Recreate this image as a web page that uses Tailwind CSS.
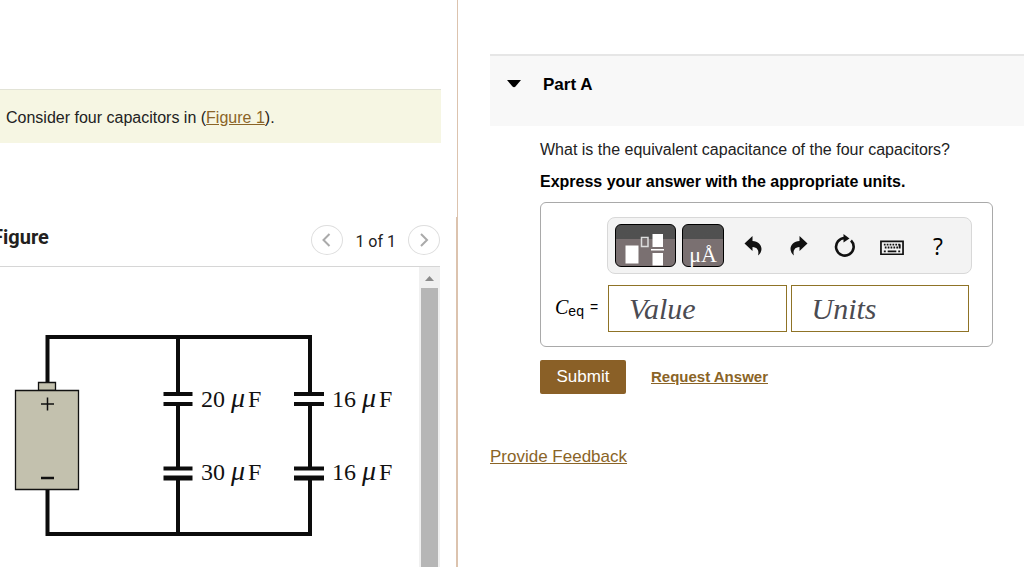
<!DOCTYPE html>
<html lang="en">
<head>
    <meta charset="UTF-8">
    <meta name="viewport" content="width=device-width, initial-scale=1.0">
    <title>Equivalent Capacitance</title>

    <!-- Tailwind CSS via CDN -->
    <script src="https://cdn.jsdelivr.net/npm/@tailwindcss/browser@4"></script>
</head>
<body class="bg-white text-black font-['Liberation_Sans',Arial,sans-serif]">
    <div class="flex min-h-screen overflow-hidden">
        <!-- Problem and figure -->
        <aside class="flex w-[458px] shrink-0 flex-col border-r border-[#dcc3ae]">
            <div class="h-[217px] pt-[89px]">
                <p class="mr-4 border-t border-[#e2e3d6] bg-[#f6f6e3] pt-4 pb-3.5 pl-1.5 text-base/[23px] text-[#222]">
                    Consider four capacitors in (<a href="#figure" class="text-[#8a6427] underline">Figure 1</a>).
                </p>
            </div>

            <section id="figure" class="flex grow flex-col border-r border-[#dcc3ae] pr-4">
                <header class="flex h-[50px] items-center justify-between border-b border-[#d6d6d6] font-[Roboto,sans-serif]">
                    <h2 class="-ml-2 pb-2.5 text-xl font-bold text-[#231f20]">Figure</h2>
                    <nav class="flex items-center gap-3" aria-label="Figures">
                        <button type="button" aria-label="Previous figure" class="mb-1 flex h-[30px] w-8 items-center justify-center rounded-[50%] border border-[#dedede]">
                            <svg class="h-4 w-4" viewBox="0 0 16 16" fill="none" stroke="#aaa" stroke-width="2"><path d="M10.500 2 4.500 8l6 6"/></svg>
                        </button>
                        <span class="text-base text-[#222]">1 of 1</span>
                        <button type="button" aria-label="Next figure" class="mb-1 flex h-[30px] w-8 items-center justify-center rounded-[50%] border border-[#dedede]">
                            <svg class="h-4 w-4" viewBox="0 0 16 16" fill="none" stroke="#aaa" stroke-width="2"><path d="m5 2 6 6-6 6"/></svg>
                        </button>
                    </nav>
                </header>

                <div class="flex grow">
                    <!-- Circuit -->
                    <svg class="h-[300px] grow" viewBox="0 267 419 300" preserveAspectRatio="xMinYMin meet" role="img" aria-label="Battery with four capacitors">
                        <g fill="none" stroke="#0c0c0c" stroke-width="4">
                            <path d="M47.500 383V337H310V393M47.500 490V534H310V480"/>
                            <path d="M178 337V393M178 404V467M178 480V534M310 404V467"/>
                            <path d="M163.500 394h29M163.500 404h29M163.500 468.500h29M294 394h30M294 404h30M294 468.500h30"/>
                            <path stroke-width="5" d="M163.500 478h29M294 478h30"/>
                        </g>
                        <g fill="#c3c1ae" stroke="#111" stroke-width="1.300">
                            <path d="M38.500 382.500h17v8h-17z"/>
                            <path d="M15.500 390.500h63v99h-63z"/>
                        </g>
                        <path d="M41 404h13M47.500 397.500v13" stroke="#111" stroke-width="1.500"/>
                        <path d="M41 478h13" stroke="#111" stroke-width="2.500"/>
                        <g class="font-['Liberation_Serif',serif] text-2xl" fill="#111">
                            <text x="201" y="407">20 <tspan class="text-[28px] italic">μ</tspan><tspan x="248">F</tspan></text>
                            <text x="201" y="480">30 <tspan class="text-[28px] italic">μ</tspan><tspan x="248">F</tspan></text>
                            <text x="332" y="407">16 <tspan class="text-[28px] italic">μ</tspan><tspan x="379">F</tspan></text>
                            <text x="332" y="480">16 <tspan class="text-[28px] italic">μ</tspan><tspan x="379">F</tspan></text>
                        </g>
                    </svg>
                    <!-- Scrollbar -->
                    <div class="flex w-[21px] flex-col items-center bg-[#f0f0f0]">
                        <svg class="h-[21px] w-[21px]" viewBox="0 0 21 21"><path d="M6 14h9l-4.500-5z" fill="#8b8b8b"/></svg>
                        <div class="w-[17px] grow bg-[#b6b6b6]"></div>
                    </div>
                </div>
            </section>
        </aside>

        <!-- Question -->
        <main class="grow pt-[54px] pl-8">
            <header class="flex h-[72px] items-start gap-[21px] border-t-2 border-[#e6e6e6] bg-[#f8f8f8] pt-4 pl-4">
                <button type="button" aria-label="Collapse part" class="flex h-6 items-center">
                    <svg class="h-2 w-4" viewBox="0 0 16 8"><path d="M1 0h14L9.500 6.500q-1.500 1.500-3 0z"/></svg>
                </button>
                <h2 class="text-[17px]/[26px] font-bold">Part A</h2>
            </header>

            <form class="pr-[31px] pl-[50px]">
                <p class="pt-3 text-base/6 text-[#222]">What is the equivalent capacitance of the four capacitors?</p>
                <p class="pt-2 text-base/6 font-bold">Express your answer with the appropriate units.</p>

                <div class="mt-2 grid grid-cols-[52px_1fr] gap-y-[11px] rounded-md border border-[#a9a9a9] py-3.5 pr-5 pl-3.5">
                    <!-- Toolbar -->
                    <div class="col-start-2 flex h-[57px] items-center rounded-lg border border-[#d8d8d8] bg-[#f3f3f3] pl-[7px]">
                        <button type="button" aria-label="Templates" class="h-[43px] w-[61px] overflow-hidden rounded-md border border-black bg-linear-to-b from-[#505050] from-35% to-[#7a7071] to-35%">
                            <svg class="h-[41px] w-[59px]" viewBox="0 0 59 41" fill="#fff">
                                <path d="M9.500 20.500h13v18h-13zM36.500 9h10.500v13h-10.500zM36.500 28h10.500v12.500h-10.500zM35 24h13v1.500h-13z"/>
                                <path d="M25.500 12.500h6.500v9h-6.500z" fill="none" stroke="#ddd" stroke-width="1.500"/>
                            </svg>
                        </button>
                        <button type="button" aria-label="Units" class="ml-1.5 flex h-[43px] w-[42px] items-end justify-center rounded-md border border-black bg-linear-to-b from-[#505050] from-35% to-[#7a7071] to-35% font-['Liberation_Serif',serif] text-[22px]/[22px] text-white">μÅ</button>
                        <div class="grid grow grid-cols-5 items-center justify-items-center pr-2.5 pl-1.5">
                            <button type="button" aria-label="Undo">
                                <svg class="h-6 w-5" viewBox="0 0 20 24"><path d="M9.500 2v5c5.500 0 9 4 9 8 0 2.500-1.500 5-3.500 6.500 1.500-5-1-8.500-5.500-8.500v4L1.500 9.500z" fill="#111"/></svg>
                            </button>
                            <button type="button" aria-label="Redo">
                                <svg class="h-6 w-5" viewBox="0 0 20 24"><path d="M10.500 2v5c-5.500 0-9 4-9 8 0 2.500 1.500 5 3.500 6.500-1.500-5 1-8.500 5.500-8.500v4l8-7.500z" fill="#111"/></svg>
                            </button>
                            <button type="button" aria-label="Reset">
                                <svg class="h-6 w-6" viewBox="0 0 24 24"><path d="M18 6.500a8.800 8.800 0 1 1-6-2.500" fill="none" stroke="#111" stroke-width="2.600"/><path d="M10.500 0v8.500l6-4z" fill="#111"/></svg>
                            </button>
                            <button type="button" aria-label="Keyboard shortcuts" class="pt-1">
                                <svg class="h-4 w-6" viewBox="0 0 25 16">
                                    <path d="M1 1h23v13.500H1z" fill="none" stroke="#111" stroke-width="1.800"/>
                                    <path d="M4 4.500h17M5 7.500h15" stroke="#111" stroke-width="2" stroke-dasharray="1.800 1.200"/>
                                    <path d="M4 11.500h2M8 11.500h9M19 11.500h2M20.500 4v4.500" stroke="#111" stroke-width="2"/>
                                </svg>
                            </button>
                            <button type="button" aria-label="Help" class="font-['Open_Sans',sans-serif] text-[23px]/6">?</button>
                        </div>
                    </div>

                    <!-- Answer -->
                    <label for="value" class="flex items-center pb-1"><span class="font-['Liberation_Serif',serif] text-xl italic">C</span><span class="pt-2 text-sm">eq</span><span class="pl-1.5 text-sm">=</span></label>
                    <div class="flex gap-1 pr-[3px] pl-px">
                        <input id="value" type="text" placeholder="Value" class="h-[47px] w-0 flex-1 border border-[#8f7326] bg-white pl-5 font-['Liberation_Serif',serif] text-3xl italic placeholder:text-[#4b4b52]">
                        <input id="units" type="text" placeholder="Units" aria-label="Units" class="h-[47px] w-0 flex-1 border border-[#8f7326] bg-white pl-5 font-['Liberation_Serif',serif] text-3xl italic placeholder:text-[#4b4b52]">
                    </div>
                </div>

                <div class="mt-[13px] flex items-center gap-[25px]">
                    <button type="submit" class="h-[34px] w-[86px] rounded-xs bg-[#8a6027] text-[17px] text-white">Submit</button>
                    <a href="#answer" class="text-[15px] font-bold text-[#8a6427] underline">Request Answer</a>
                </div>
            </form>

            <a href="#feedback" class="mt-[51px] inline-block text-[17px]/6 text-[#8a6427] underline">Provide Feedback</a>
        </main>
    </div>
</body>
</html>
